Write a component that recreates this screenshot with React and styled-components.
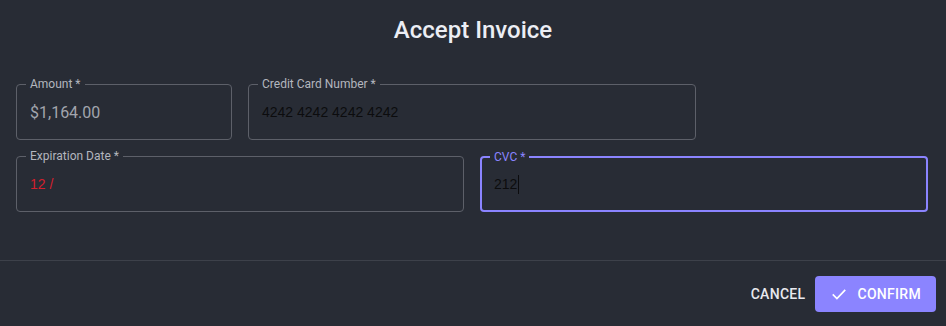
import React from 'react';
import styled, { createGlobalStyle } from 'styled-components';

const GlobalStyle = createGlobalStyle`
	html, body {
		margin: 0;
		padding: 0;
		background: #282c35;
	}
	body {
		font-family: Roboto, "Liberation Sans", Arial, sans-serif;
	}
`;

const Dialog = styled('div')`
	width: 946px;
	height: 326px;
	background: #282c35;
	display: flex;
	flex-direction: column;
`;

const Title = styled('h2')`
	margin: 0;
	height: 60px;
	display: flex;
	align-items: center;
	justify-content: center;
	font-size: 24px;
	font-weight: 500;
	color: #eceef4;
`;

const Content = styled('div')`
	padding: 24px 18px 48px 16px;
	display: grid;
	grid-template-columns: repeat(4, 216px);
	column-gap: 16px;
	row-gap: 16px;
	border-bottom: 1px solid #3d414a;
`;

const Field = styled('div')`
	position: relative;
	grid-column: span ${({ span }) => span};
	height: 56px;
	box-sizing: border-box;
	border: ${({ focused }) => (focused ? '2px solid #8b84ff' : '1px solid #5d6069')};
	border-radius: 4px;
	display: flex;
	align-items: center;
	padding-left: ${({ focused }) => (focused ? '12px' : '13px')};
`;

const Label = styled('span')`
	position: absolute;
	top: -8px;
	left: ${({ focused }) => (focused ? '8px' : '9px')};
	padding: 0 4px;
	background: #282c35;
	font-size: 12px;
	line-height: 14px;
	color: ${({ focused }) => (focused ? '#8b84ff' : '#b3b6be')};
`;

const Value = styled('span')`
	font-family: ${({ muted }) => (muted ? 'Roboto, sans-serif' : '"Liberation Sans", Arial, sans-serif')};
	font-size: ${({ muted }) => (muted ? '16px' : '14px')};
	color: ${({ tone }) => tone};
	display: flex;
	align-items: center;
`;

const Caret = styled('span')`
	display: inline-block;
	width: 1px;
	height: 19px;
	margin-left: 1px;
	background: #0c0c0e;
`;

const Footer = styled('div')`
	flex: 1;
	display: flex;
	align-items: center;
	justify-content: flex-end;
	gap: 2px;
	padding: 0 10px 0 0;
`;

const Button = styled('button')`
	height: 36px;
	border: none;
	border-radius: 4px;
	display: flex;
	align-items: center;
	gap: 8px;
	padding: ${({ primary }) => (primary ? '0 15px 0 14px' : '0 8px')};
	background: ${({ primary }) => (primary ? '#8b84ff' : 'transparent')};
	color: ${({ primary }) => (primary ? '#ffffff' : '#e8e9ef')};
	font-family: Roboto, sans-serif;
	font-size: 14px;
	font-weight: 500;
	letter-spacing: 0.3px;
	text-transform: uppercase;
	cursor: pointer;
`;

const Check = () => (
	<svg width="20" height="20" viewBox="0 0 24 24" fill="none">
		<path d="M4.5 12.5l5 5 10-10.5" stroke="#ffffff" strokeWidth="2" />
	</svg>
);

const fields = [
	{ label: 'Amount', value: '$1,164.00', span: 1, tone: '#a2a5ad', muted: true },
	{ label: 'Credit Card Number', value: '4242 4242 4242 4242', span: 2, tone: '#0c0c0e' },
	{ label: 'Expiration Date', value: '12 /', span: 2, tone: '#d41f2d' },
	{ label: 'CVC', value: '212', span: 2, tone: '#0c0c0e', focused: true },
];

const App = () => (
	<>
		<GlobalStyle />
		<Dialog>
			<Title>Accept Invoice</Title>
			<Content>
				{fields.map((f) => (
					<Field key={f.label} span={f.span} focused={f.focused}>
						<Label focused={f.focused}>{f.label} *</Label>
						<Value tone={f.tone} muted={f.muted}>
							{f.value}
							{f.focused && <Caret />}
						</Value>
					</Field>
				))}
			</Content>
			<Footer>
				<Button>Cancel</Button>
				<Button primary>
					<Check />
					Confirm
				</Button>
			</Footer>
		</Dialog>
	</>
);

export default App;
